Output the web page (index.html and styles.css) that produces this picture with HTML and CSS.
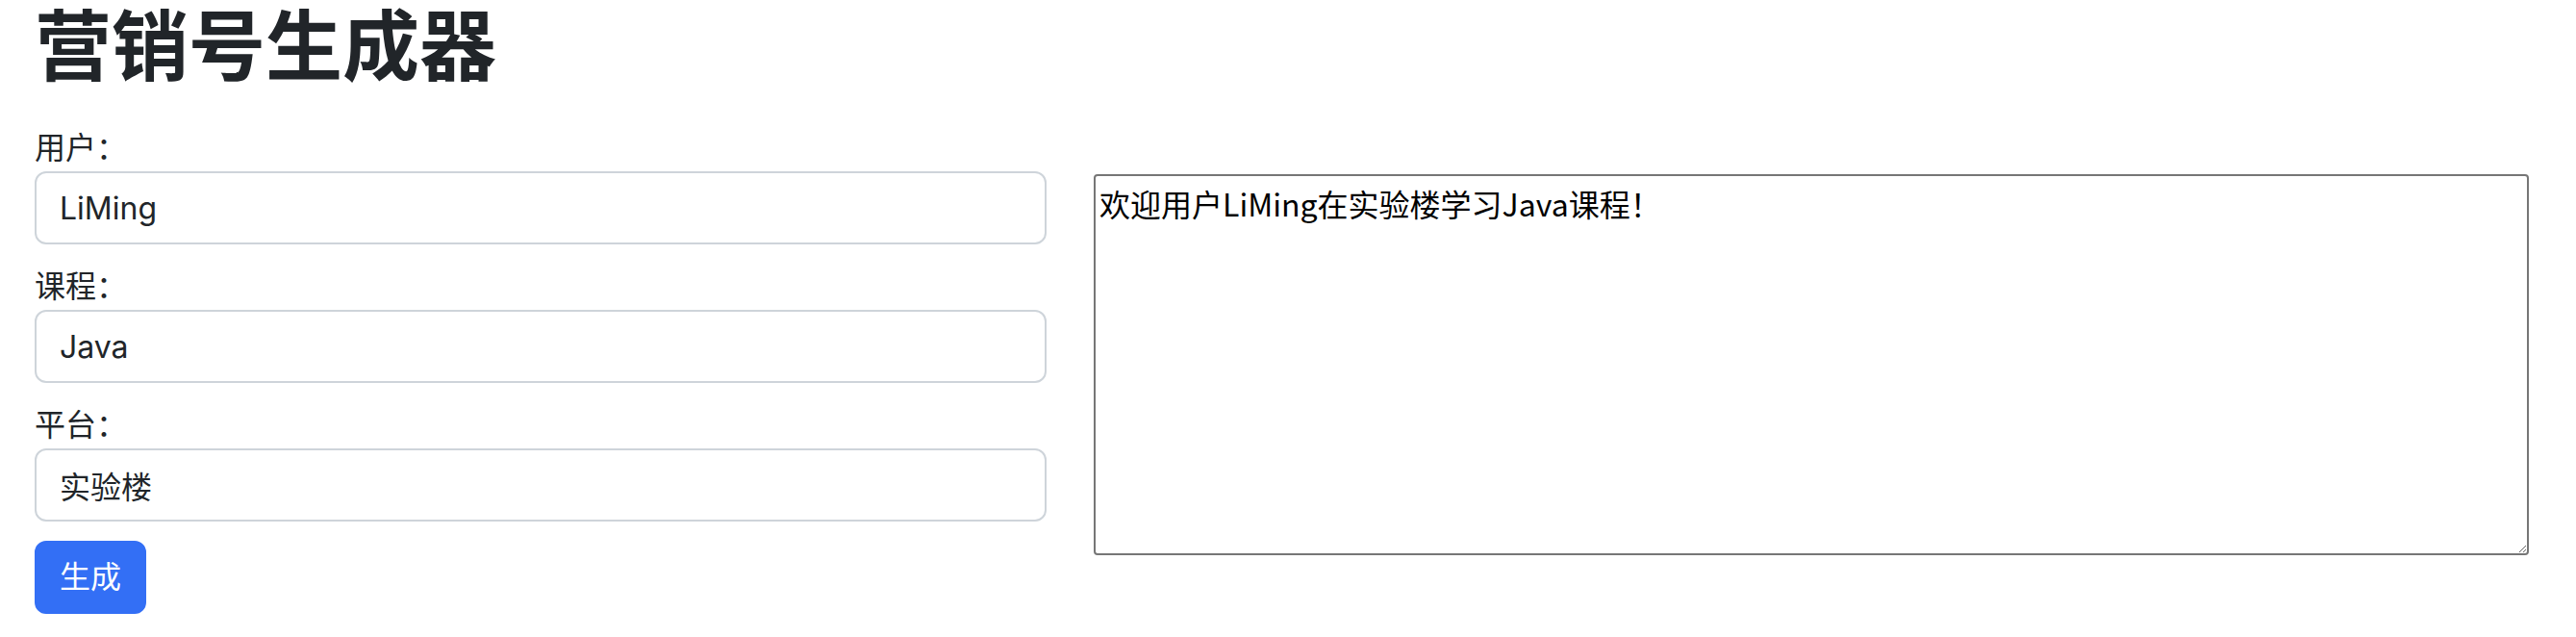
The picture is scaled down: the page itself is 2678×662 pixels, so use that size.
FILE: index.html
```html
<!DOCTYPE html>
<html lang="zh-CN">
<head>
<meta charset="utf-8">
<title>营销号生成器</title>
<link rel="stylesheet" href="styles.css">
</head>
<body>
<div class="page">
  <h1 class="title">营销号生成器</h1>
  <div class="layout">
    <form class="form">
      <div class="field">
        <label class="label" for="user">用户：</label>
        <input class="control" id="user" type="text" value="LiMing">
      </div>
      <div class="field">
        <label class="label" for="course">课程：</label>
        <input class="control" id="course" type="text" value="Java">
      </div>
      <div class="field">
        <label class="label" for="platform">平台：</label>
        <input class="control" id="platform" type="text" value="实验楼">
      </div>
      <button class="btn" type="button">生成</button>
    </form>
    <div class="output">
      <textarea class="result">欢迎用户LiMing在实验楼学习Java课程！</textarea>
    </div>
  </div>
</div>
</body>
</html>
```

FILE: styles.css
```css
html, body {
  margin: 0;
  padding: 0;
  background: #ffffff;
}

body {
  font-family: Inter, "Noto Sans CJK SC", "Noto Sans", sans-serif;
  font-size: 32px;
  line-height: 1.5;
  color: #212529;
}

.page {
  padding: 0 49px 0 36px;
}

.title {
  margin: 0 0 34px 0;
  font-size: 80px;
  font-weight: 600;
  line-height: 1.2;
  color: #212529;
}

.layout {
  display: grid;
  grid-template-columns: 1052px 1492px;
  column-gap: 49px;
  align-items: start;
}

.form {
  margin: 0;
  display: flex;
  flex-direction: column;
  align-items: flex-start;
}

.field {
  display: flex;
  flex-direction: column;
  align-self: stretch;
  margin-bottom: 20px;
}

.label {
  display: block;
  height: 48px;
  line-height: 48px;
}

.control {
  box-sizing: border-box;
  width: 100%;
  height: 76px;
  margin: 0;
  padding: 12px 24px;
  font-family: inherit;
  font-size: 32px;
  line-height: 48px;
  color: #212529;
  background: #ffffff;
  border: 2px solid #ced4da;
  border-radius: 12px;
  outline: none;
}

.btn {
  box-sizing: border-box;
  height: 76px;
  margin: 0;
  padding: 12px 24px;
  font-family: inherit;
  font-size: 32px;
  line-height: 48px;
  color: #ffffff;
  background: #336ff5;
  border: 2px solid #336ff5;
  border-radius: 12px;
  cursor: pointer;
}

.output {
  padding-top: 51px;
}

.result {
  display: block;
  box-sizing: border-box;
  width: 1492px;
  height: 396px;
  margin: 0;
  padding: 4px;
  font-family: "Noto Sans CJK SC", "Noto Sans", sans-serif;
  font-size: 32px;
  line-height: 48px;
  color: #000000;
  background: #ffffff;
  border: 2px solid #767676;
  border-radius: 4px;
  outline: none;
}
```
